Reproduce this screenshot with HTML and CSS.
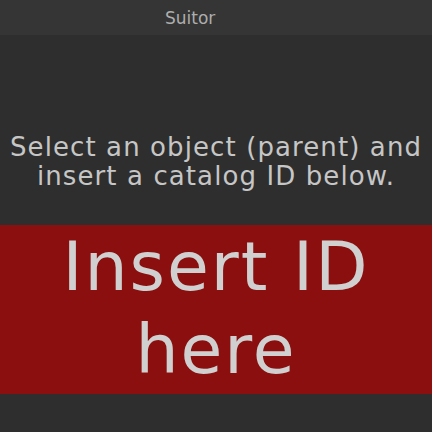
FILE: index.html
```html
<!DOCTYPE html>
<html lang="en">
<head>
    <meta charset="UTF-8">
    <title>Suitor</title>
    <link rel="stylesheet" href="styles.css">
</head>
<body>
    <div class="titlebar">
        <span class="title">Suitor</span>
    </div>
    <div class="main-content">
        <p class="hint">Select an object (parent) and insert a catalog ID below.</p>
        <div class="id-box">
            <span class="id-text">Insert ID here</span>
        </div>
    </div>
</body>
</html>
```

FILE: styles.css
```css
body {
    margin: 0;
    padding: 0;
    width: 432px;
    height: 432px;
    overflow: hidden;
    background-color: #2e2e2e;
    font-family: "DejaVu Sans", sans-serif;
}
.titlebar {
    height: 35px;
    background-color: #353535;
    display: flex;
    align-items: center;
    padding-left: 165px;
}
.title {
    font-size: 17px;
    color: #adadad;
}
.main-content {
    padding-top: 98px;
}
.hint {
    margin: 0 0 34px;
    padding: 0 2px;
    text-align: center;
    font-size: 26px;
    line-height: 29px;
    letter-spacing: 1.1px;
    color: #c6c6c6;
}
.id-box {
    height: 165px;
    padding-bottom: 4px;
    background-color: #8b0f0f;
    display: flex;
    align-items: center;
    justify-content: center;
    text-align: center;
}
.id-text {
    width: 320px;
    font-size: 68px;
    line-height: 83px;
    letter-spacing: 2px;
    color: #d0d0d0;
}
```
